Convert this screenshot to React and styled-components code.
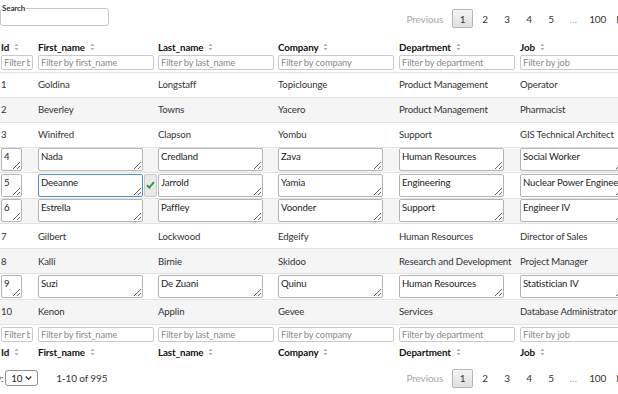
import React from 'react';
import styled, { createGlobalStyle } from 'styled-components';

const GlobalStyle = createGlobalStyle`
  html, body {
    margin: 0;
    padding: 0;
    background: #fff;
    overflow: hidden;
  }
  body {
    font-family: Lato, 'Open Sans', sans-serif;
    font-size: 9.6px;
    letter-spacing: -0.12px;
    color: #333;
  }
`;

const rows = [
  { id: 1, first: 'Goldina', last: 'Longstaff', company: 'Topiclounge', dept: 'Product Management', job: 'Operator' },
  { id: 2, first: 'Beverley', last: 'Towns', company: 'Yacero', dept: 'Product Management', job: 'Pharmacist' },
  { id: 3, first: 'Winifred', last: 'Clapson', company: 'Yombu', dept: 'Support', job: 'GIS Technical Architect' },
  { id: 4, first: 'Nada', last: 'Credland', company: 'Zava', dept: 'Human Resources', job: 'Social Worker', edit: true },
  { id: 5, first: 'Deeanne', last: 'Jarrold', company: 'Yamia', dept: 'Engineering', job: 'Nuclear Power Engineer', edit: true, focused: true },
  { id: 6, first: 'Estrella', last: 'Paffley', company: 'Voonder', dept: 'Support', job: 'Engineer IV', edit: true },
  { id: 7, first: 'Gilbert', last: 'Lockwood', company: 'Edgeify', dept: 'Human Resources', job: 'Director of Sales' },
  { id: 8, first: 'Kalli', last: 'Birnie', company: 'Skidoo', dept: 'Research and Development', job: 'Project Manager' },
  { id: 9, first: 'Suzi', last: 'De Zuani', company: 'Quinu', dept: 'Human Resources', job: 'Statistician IV', edit: true },
  { id: 10, first: 'Kenon', last: 'Applin', company: 'Gevee', dept: 'Services', job: 'Database Administrator I' },
];

const columns = [
  { key: 'id', label: 'Id', width: 37, filter: 'Filter by id' },
  { key: 'first', label: 'First_name', width: 120, filter: 'Filter by first_name' },
  { key: 'last', label: 'Last_name', width: 120, filter: 'Filter by last_name' },
  { key: 'company', label: 'Company', width: 121, filter: 'Filter by company' },
  { key: 'dept', label: 'Department', width: 121, filter: 'Filter by department' },
  { key: 'job', label: 'Job', width: 121, filter: 'Filter by job' },
];

const Page = styled.div`
  width: 642px;
`;

const TopBar = styled.div`
  height: 39px;
  display: flex;
  justify-content: space-between;
  align-items: flex-start;
`;

const SearchBox = styled.fieldset`
  margin: 3px 0 0 0;
  padding: 0;
  width: 109px;
  height: 23px;
  box-sizing: border-box;
  border: 1px solid #c8c8c8;
  border-radius: 3px;

  legend {
    padding: 0 1px 0 0;
    margin-left: 1px;
    font-size: 8px;
    font-weight: bold;
    color: #333;
    line-height: 10px;
  }
`;

const Pager = styled.div`
  display: flex;
  align-items: center;
  padding-top: ${({ top }) => top}px;
`;

const PageLink = styled.span`
  display: inline-flex;
  align-items: center;
  justify-content: center;
  box-sizing: border-box;
  height: 19px;
  min-width: ${({ active }) => (active ? '21px' : '22px')};
  padding: 0 4px;
  margin: 0 ${({ active }) => (active ? '1px' : '0')} 0 ${({ gap }) => gap ?? 0}px;
  color: ${({ disabled }) => (disabled ? '#a8a8a8' : '#333')};
  font-size: 10px;
  border: 1px solid ${({ active }) => (active ? '#b5b5b5' : 'transparent')};
  border-radius: 2px;
  background: ${({ active }) => (active ? 'linear-gradient(#f4f4f4, #e0e0e0)' : 'transparent')};
`;

const Table = styled.table`
  border-collapse: collapse;
  table-layout: fixed;
  width: 640px;
`;

const HeadRow = styled.tr`
  height: 16px;
`;

const HeadCell = styled.th`
  text-align: left;
  padding: 0 0 0 1px;
  font-weight: bold;
  font-size: 9.8px;
  color: #111;
  white-space: nowrap;
  overflow: hidden;
`;

const FilterRow = styled.tr`
  height: ${({ foot }) => (foot ? 20 : 17)}px;
  border-${({ foot }) => (foot ? 'top' : 'bottom')}: 1px solid #e2e2e2;
`;

const FilterCell = styled.td`
  padding: 0 0 0 1px;
  overflow: hidden;
  vertical-align: ${({ foot }) => (foot ? 'middle' : 'top')};
`;

const FilterInput = styled.input`
  box-sizing: border-box;
  width: ${({ w }) => w}px;
  height: 15px;
  border: 1px solid #c9c9c9;
  border-radius: 2px;
  padding: 0 2px;
  font-family: inherit;
  font-size: 9.3px;
  letter-spacing: -0.1px;
  color: #333;
  display: block;

  &::placeholder {
    color: #8a8a8a;
  }
`;

const BodyRow = styled.tr`
  height: ${({ edit }) => (edit ? 25.5 : 25)}px;
  background: ${({ striped }) => (striped ? '#f5f5f5' : '#fff')};
  border-bottom: 1px solid #e2e2e2;
`;

const Cell = styled.td`
  padding: 0 0 0 1px;
  white-space: nowrap;
  overflow: hidden;
  vertical-align: middle;
`;

const EditWrap = styled.div`
  display: flex;
  align-items: stretch;
`;

const EditArea = styled.textarea`
  box-sizing: border-box;
  width: ${({ w }) => w}px;
  height: 23px;
  margin: 0;
  padding: 1px 2px;
  border: 1px solid ${({ focused }) => (focused ? '#4a8fd8' : '#b4b4b4')};
  border-radius: 2px;
  font-family: inherit;
  font-size: 9.6px;
  letter-spacing: -0.12px;
  line-height: 13px;
  color: #222;
  outline: none;
  resize: both;
  display: block;
  flex: none;
  overflow: hidden;
  white-space: pre;
`;

const SaveButton = styled.button`
  box-sizing: border-box;
  width: 13px;
  height: 23px;
  margin: 0 0 0 1px;
  padding: 0;
  border: 1px solid #c9c9c9;
  border-radius: 2px;
  background: #e9e9e9;
  display: flex;
  align-items: center;
  justify-content: center;
`;

const BottomBar = styled.div`
  height: 36px;
  display: flex;
  justify-content: space-between;
  align-items: center;
`;

const Info = styled.div`
  display: flex;
  align-items: center;
  overflow: hidden;
`;

const ShowLabel = styled.span`
  margin-left: -22px;
  margin-right: 2px;
`;

const SelectWrap = styled.span`
  position: relative;
  display: inline-block;
  width: 33px;
  height: 16px;

  svg {
    position: absolute;
    right: 6px;
    top: 6px;
    pointer-events: none;
  }
`;

const PageSize = styled.select`
  box-sizing: border-box;
  appearance: none;
  width: 33px;
  height: 16px;
  font-family: inherit;
  font-size: 9.8px;
  border: 1px solid #8f8f8f;
  border-radius: 3px;
  padding: 0 0 0 5px;
  margin: 0;
  background: #fff;
  color: #222;
  display: block;
`;

const Count = styled.span`
  margin-left: 18px;
  color: #333;
  font-size: 10px;
`;

const SortIcon = () => (
  <svg width="5" height="8" viewBox="0 0 5 8" style={{ marginLeft: 5, verticalAlign: '0px' }}>
    <path d="M2.5 0.5 L4.5 3 L0.5 3 Z" fill="#b0b0b0" />
    <path d="M2.5 7.5 L4.5 5 L0.5 5 Z" fill="#b0b0b0" />
  </svg>
);

const Check = () => (
  <svg width="9" height="8" viewBox="0 0 9 8">
    <path d="M1 4.2 L3.3 6.6 L8 1.2" stroke="#2f9a3a" strokeWidth="2" fill="none" />
  </svg>
);

const Chevron = () => (
  <svg width="7" height="4" viewBox="0 0 7 4">
    <path d="M0.7 0.5 L3.5 3.2 L6.3 0.5" stroke="#333" strokeWidth="1.2" fill="none" />
  </svg>
);

const Pagination = ({ top }) => (
  <Pager top={top}>
    <PageLink disabled>Previous</PageLink>
    <PageLink active gap={4}>1</PageLink>
    <PageLink>2</PageLink>
    <PageLink>3</PageLink>
    <PageLink>4</PageLink>
    <PageLink>5</PageLink>
    <PageLink disabled>…</PageLink>
    <PageLink>100</PageLink>
    <PageLink>Next</PageLink>
  </Pager>
);

const HeaderRow = () => (
  <HeadRow>
    {columns.map((c) => (
      <HeadCell key={c.key}>
        {c.label}
        <SortIcon />
      </HeadCell>
    ))}
  </HeadRow>
);

const Filters = ({ foot }) => (
  <FilterRow foot={foot}>
    {columns.map((c) => (
      <FilterCell key={c.key} foot={foot}>
        <FilterInput w={c.key === 'id' ? 32 : 116} placeholder={c.filter} />
      </FilterCell>
    ))}
  </FilterRow>
);

const App = () => (
  <Page>
    <GlobalStyle />
    <TopBar>
      <SearchBox>
        <legend>Search</legend>
      </SearchBox>
      <Pagination top={9} />
    </TopBar>
    <Table>
      <colgroup>
        {columns.map((c) => (
          <col key={c.key} style={{ width: c.width }} />
        ))}
      </colgroup>
      <thead>
        <HeaderRow />
        <Filters />
      </thead>
      <tbody>
        {rows.map((r, i) => (
          <BodyRow key={r.id} edit={r.edit} striped={i % 2 === 1}>
            {columns.map((c) => (
              <Cell key={c.key}>
                {r.edit ? (
                  <EditWrap>
                    <EditArea
                      w={c.key === 'id' ? 21 : 105}
                      focused={r.focused && c.key === 'first'}
                      defaultValue={r[c.key]}
                      spellCheck={false}
                      wrap="off"
                    />
                    {r.focused && c.key === 'first' && (
                      <SaveButton>
                        <Check />
                      </SaveButton>
                    )}
                  </EditWrap>
                ) : (
                  r[c.key]
                )}
              </Cell>
            ))}
          </BodyRow>
        ))}
      </tbody>
      <tfoot>
        <Filters foot />
        <HeaderRow />
      </tfoot>
    </Table>
    <BottomBar>
      <Info>
        <ShowLabel>Show:</ShowLabel>
        <SelectWrap>
          <PageSize defaultValue="10">
            <option value="10">10</option>
            <option value="25">25</option>
            <option value="50">50</option>
          </PageSize>
          <Chevron />
        </SelectWrap>
        <Count>1-10 of 995</Count>
      </Info>
      <Pagination top={0} />
    </BottomBar>
  </Page>
);

export default App;
